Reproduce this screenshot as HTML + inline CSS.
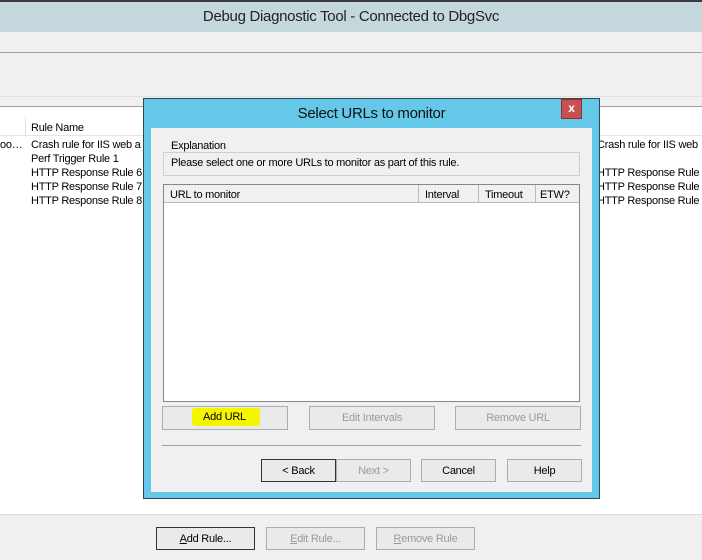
<!DOCTYPE html>
<html><head><style>
*{box-sizing:border-box;margin:0;padding:0}
body{width:702px;height:560px;overflow:hidden;background:#fff;font-family:"Liberation Sans",sans-serif;font-size:11px;letter-spacing:-0.25px;color:#000;position:relative}
.a{position:absolute}
.t{position:absolute;white-space:nowrap}
.btn{position:absolute;background:#eaeaea;border:1px solid #adadad;text-align:center;line-height:22px;font-size:11px}
.dis{color:#9a9a9a}
</style></head><body>
<div class="a" style="left:0;top:0;width:702px;height:2px;background:#3a3a3a"></div>
<div class="a" style="left:0;top:2px;width:702px;height:30px;background:#c3d7dc"></div>
<div class="t" style="left:0;width:702px;top:8px;text-align:center;font-size:15px;color:#222;letter-spacing:-0.3px">Debug Diagnostic Tool - Connected to DbgSvc</div>
<div class="a" style="left:0;top:32px;width:702px;height:75px;background:#f0f0f0"></div>
<div class="a" style="left:0;top:52px;width:702px;height:1px;background:#a0a0a0"></div>
<div class="a" style="left:0;top:96px;width:702px;height:1px;background:#e0e0e0"></div>
<div class="a" style="left:0;top:106px;width:702px;height:1px;background:#a0a0a0"></div>
<div class="a" style="left:0;top:117px;width:702px;height:19px;background:#fff;border-bottom:1px solid #e5e5e5"></div>
<div class="a" style="left:25px;top:117px;width:1px;height:19px;background:#e0e0e0"></div>
<div class="t" style="left:31px;top:122px">Rule Name</div>
<div class="t" style="left:0;top:139px">oo…</div>
<div class="t" style="left:31px;top:139px">Crash rule for IIS web a</div>
<div class="t" style="left:31px;top:153px">Perf Trigger Rule 1</div>
<div class="t" style="left:31px;top:167px">HTTP Response Rule 6</div>
<div class="t" style="left:31px;top:181px">HTTP Response Rule 7</div>
<div class="t" style="left:31px;top:195px">HTTP Response Rule 8</div>
<div class="t" style="left:597px;top:139px">Crash rule for IIS web</div>
<div class="t" style="left:597px;top:167px">HTTP Response Rule 6</div>
<div class="t" style="left:597px;top:181px">HTTP Response Rule 7</div>
<div class="t" style="left:597px;top:195px">HTTP Response Rule 8</div>
<div class="a" style="left:0;top:514px;width:702px;height:46px;background:#f0f0f0;border-top:1px solid #dadada"></div>
<div class="btn" style="left:156px;top:527px;width:99px;height:23px;border-color:#333"><u>A</u>dd Rule...</div>
<div class="btn dis" style="left:266px;top:527px;width:99px;height:23px"><u>E</u>dit Rule...</div>
<div class="btn dis" style="left:376px;top:527px;width:99px;height:23px"><u>R</u>emove Rule</div>
<!-- dialog -->
<div class="a" style="left:143px;top:98px;width:457px;height:401px;background:#65c8e8;border:1px solid #2a4a58"></div>
<div class="t" style="left:143px;width:457px;top:105px;text-align:center;font-size:15px;color:#111;letter-spacing:-0.3px">Select URLs to monitor</div>
<div class="a" style="left:561px;top:99px;width:21px;height:20px;background:#c75050;border:1px solid #8a3030;color:#fff;font-weight:bold;font-size:12px;text-align:center;line-height:17px">x</div>
<div class="a" style="left:151px;top:128px;width:441px;height:364px;background:#f0f0f0"></div>
<div class="a" style="left:163px;top:152px;width:417px;height:24px;border:1px solid #cfcfcf"></div>
<div class="t" style="left:169px;top:140px;background:#f0f0f0;padding:0 2px">Explanation</div>
<div class="t" style="left:171px;top:157px">Please select one or more URLs to monitor as part of this rule.</div>
<div class="a" style="left:163px;top:184px;width:417px;height:218px;background:#fff;border:1px solid #828790"></div>
<div class="a" style="left:164px;top:185px;width:415px;height:18px;background:#f0f0f0;border-bottom:1px solid #bbb"></div>
<div class="a" style="left:418px;top:185px;width:1px;height:18px;background:#bbb"></div>
<div class="a" style="left:478px;top:185px;width:1px;height:18px;background:#bbb"></div>
<div class="a" style="left:535px;top:185px;width:1px;height:18px;background:#bbb"></div>
<div class="t" style="left:170px;top:189px">URL to monitor</div>
<div class="t" style="left:425px;top:189px">Interval</div>
<div class="t" style="left:485px;top:189px">Timeout</div>
<div class="t" style="left:540px;top:189px">ETW?</div>
<div class="btn" style="left:162px;top:406px;width:126px;height:24px"></div>
<div class="a" style="left:192px;top:408px;width:68px;height:18px;background:#f5f500;border-radius:3px"></div>
<div class="t" style="left:203px;top:411px">Add URL</div>
<div class="btn dis" style="left:309px;top:406px;width:126px;height:24px">Edit Intervals</div>
<div class="btn dis" style="left:455px;top:406px;width:126px;height:24px">Remove URL</div>
<div class="a" style="left:162px;top:445px;width:419px;height:1px;background:#a0a0a0"></div>
<div class="btn" style="left:261px;top:459px;width:75px;height:23px;border-color:#333">&lt; Back</div>
<div class="btn dis" style="left:336px;top:459px;width:75px;height:23px">Next &gt;</div>
<div class="btn" style="left:421px;top:459px;width:75px;height:23px">Cancel</div>
<div class="btn" style="left:507px;top:459px;width:75px;height:23px">Help</div>
</body></html>
